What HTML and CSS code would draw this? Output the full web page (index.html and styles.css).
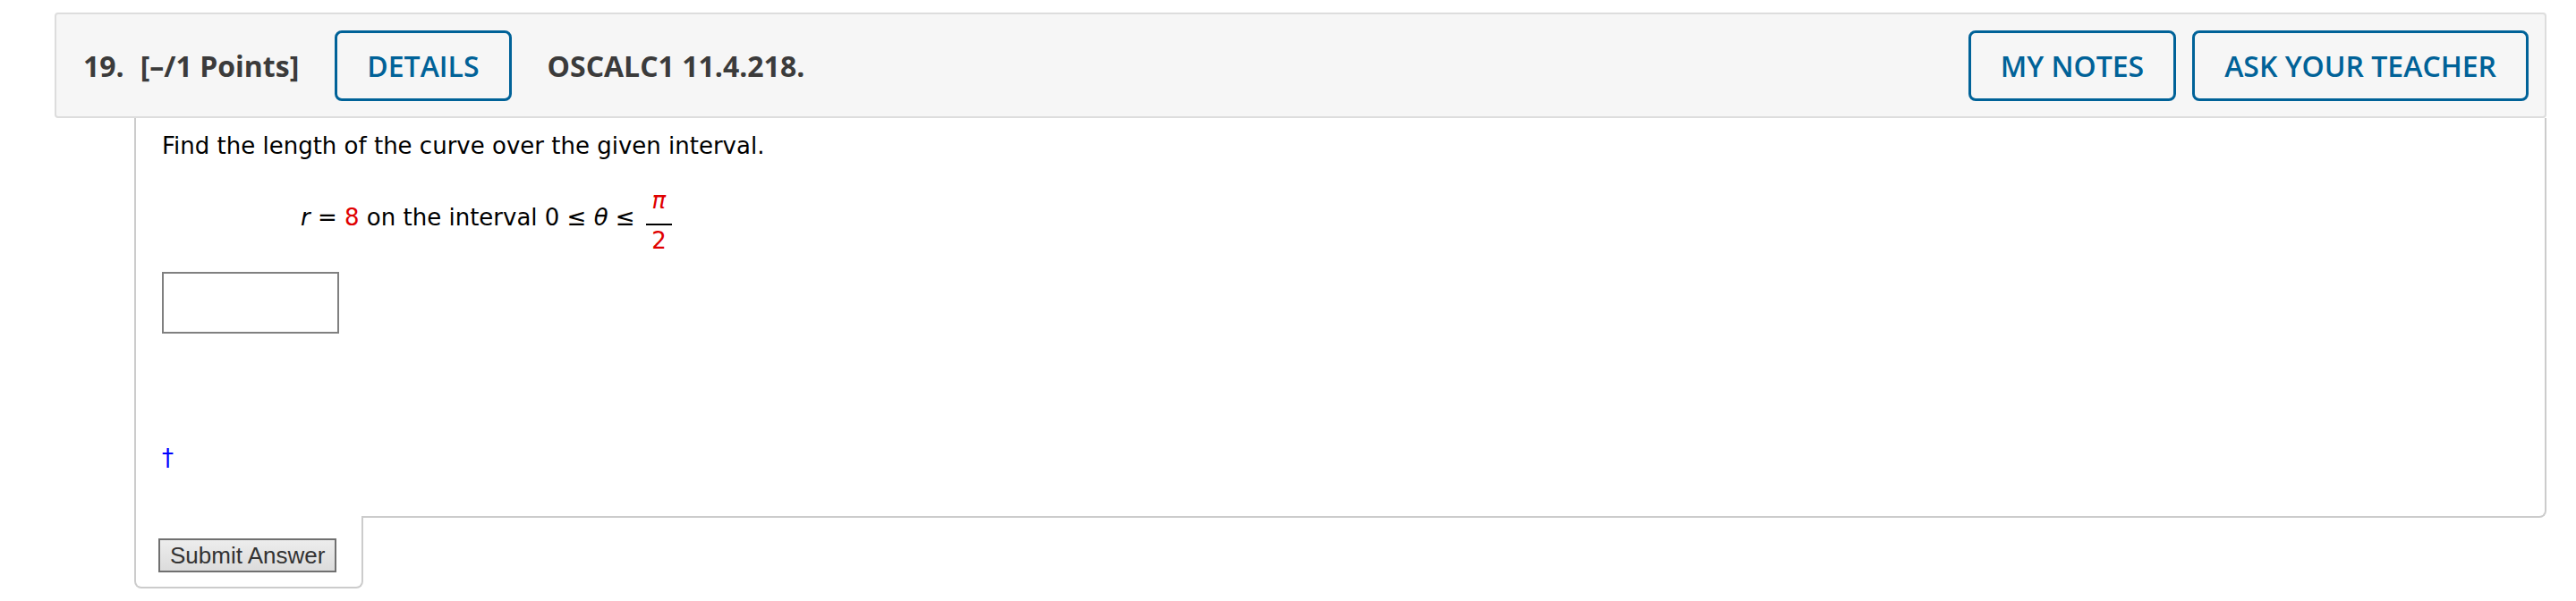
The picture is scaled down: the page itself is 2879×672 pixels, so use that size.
FILE: index.html
```html
<!DOCTYPE html>
<html lang="en">
<head>
<meta charset="utf-8">
<title>Question 19</title>
<link rel="stylesheet" href="styles.css">
</head>
<body>
<div class="page">
  <div class="q-header">
    <span class="q-num">19.</span>
    <span class="q-points">[–/1 Points]</span>
    <button class="hdr-btn details-btn">DETAILS</button>
    <span class="q-code">OSCALC1 11.4.218.</span>
    <div class="hdr-right">
      <button class="hdr-btn">MY NOTES</button>
      <button class="hdr-btn">ASK YOUR TEACHER</button>
    </div>
  </div>
  <div class="q-body">
    <p class="prompt">Find the length of the curve over the given interval.</p>
    <div class="eq"><i>r</i> = <span class="red">8</span> on the interval 0 ≤ <i>θ</i> ≤ <span class="frac"><span class="num red"><i>π</i></span><span class="bar"></span><span class="den red">2</span></span></div>
    <input class="answer" type="text" aria-label="answer">
    <div class="dagger">†</div>
  </div>
  <div class="submit-tab">
    <button class="submit-btn">Submit Answer</button>
  </div>
</div>
</body>
</html>
```

FILE: styles.css
```css
html, body {
  margin: 0;
  padding: 0;
  background: #ffffff;
}

.page {
  width: 2879px;
  height: 672px;
  box-sizing: border-box;
  padding: 14px 33px 0 61px;
  overflow: hidden;
}

.q-header {
  display: flex;
  align-items: center;
  height: 118px;
  box-sizing: border-box;
  border: 2px solid #dddddd;
  border-radius: 4px;
  background: #f6f6f6;
  padding: 0 18px 0 30px;
  font-family: "Open Sans", "Noto Sans", sans-serif;
  font-size: 32px;
  color: #3b3b3b;
}

.q-num,
.q-points,
.q-code {
  font-weight: 700;
  white-space: nowrap;
}

.q-points {
  margin-left: 18px;
}

.details-btn {
  margin-left: 40px;
  margin-right: 40px;
}

.hdr-btn {
  height: 79px;
  box-sizing: border-box;
  padding: 0 33px;
  border: 3px solid #006298;
  border-radius: 8px;
  background: transparent;
  color: #006298;
  font-family: "Open Sans", "Noto Sans", sans-serif;
  font-size: 32px;
  font-weight: 600;
  white-space: nowrap;
  cursor: pointer;
}

.hdr-right {
  margin-left: auto;
  display: flex;
  gap: 18px;
}

.q-body {
  margin-left: 89px;
  border: 2px solid #cccccc;
  border-top: none;
  border-bottom-right-radius: 8px;
  padding: 15px 0 49px 29px;
  font-family: "DejaVu Sans", Verdana, sans-serif;
  font-size: 26px;
  color: #000000;
}

.prompt {
  margin: 0;
  line-height: 32px;
}

.eq {
  margin-top: 32px;
  padding-left: 155px;
  line-height: 32px;
  white-space: nowrap;
}

.red {
  color: #e00000;
}

.frac {
  display: inline-flex;
  flex-direction: column;
  align-items: center;
  vertical-align: 19px;
  margin-left: 4px;
  width: 29px;
}

.num {
  line-height: 26px;
  padding-bottom: 13px;
}

.bar {
  display: block;
  width: 29px;
  height: 2px;
  background: #000000;
}

.den {
  line-height: 26px;
  margin-top: 4px;
}

.answer {
  display: block;
  margin: 22px 0 0 0;
  width: 198px;
  height: 69px;
  box-sizing: border-box;
  border: 2px solid #808080;
  padding: 0;
  background: #ffffff;
}

.dagger {
  margin-top: 123px;
  line-height: 32px;
  color: #0000ff;
}

.submit-tab {
  margin-left: 89px;
  margin-top: -2px;
  width: 256px;
  box-sizing: border-box;
  border: 2px solid #cccccc;
  border-top: none;
  border-radius: 0 0 8px 8px;
  background: #ffffff;
  padding: 25px 0 16px 25px;
}

.submit-btn {
  display: block;
  height: 38px;
  box-sizing: border-box;
  padding: 0 11px;
  border: 2px solid #707070;
  background: linear-gradient(#ededed, #dcdcdc);
  color: #333333;
  font-family: "Liberation Sans", Arial, sans-serif;
  font-size: 26px;
  line-height: 32px;
  white-space: nowrap;
}
```
